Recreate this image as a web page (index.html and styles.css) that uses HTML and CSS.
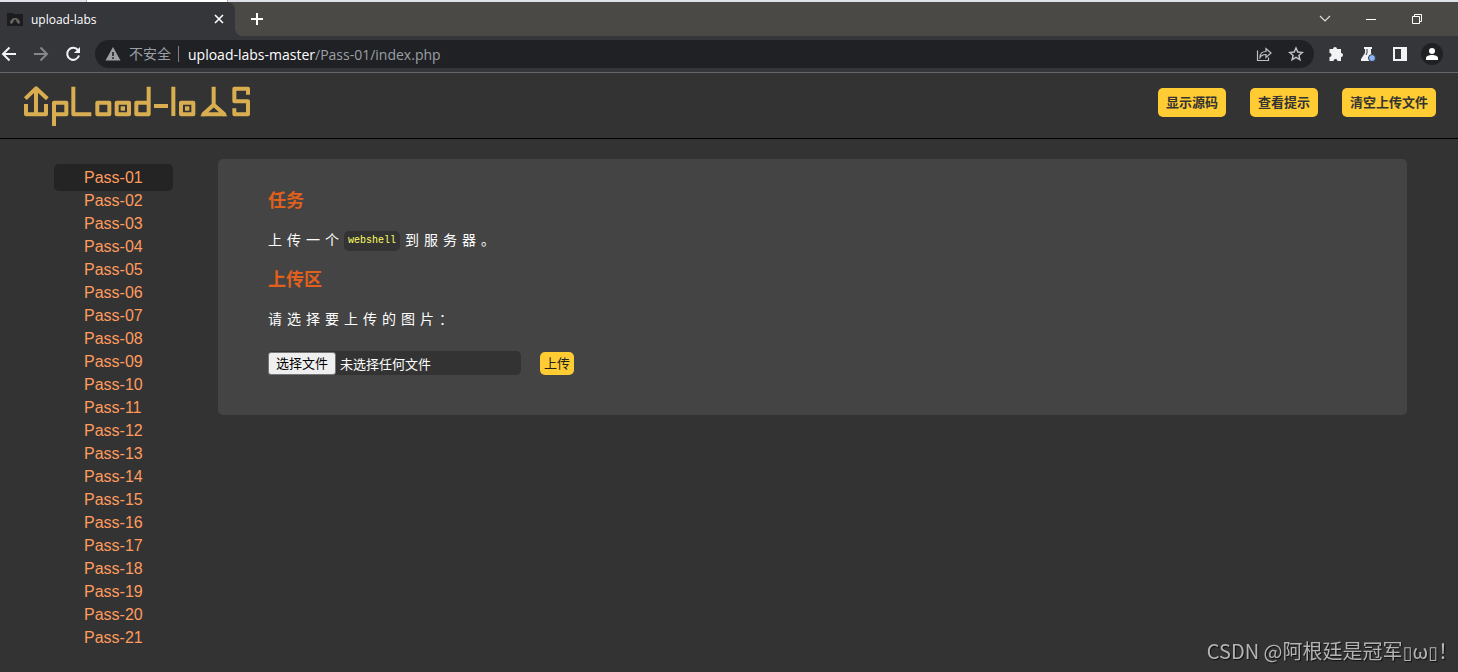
FILE: index.html
```
<!DOCTYPE html>
<html lang="zh-CN">
  <head>
    <meta charset="UTF-8" />
    <title>upload-labs</title>
    <link rel="stylesheet" href="styles.css">
  </head>
  <body>
    <div class="browser">
      <div class="desktop-edge"><span class="edge-light"></span></div>
      <div class="tab-strip">
        <div class="tab">
          <svg class="favicon" width="16" height="14" viewBox="0 0 16 14">
            <path d="M0 1h6l1 1h9v12H0z" fill="#1c1c1c" />
            <path d="M3 11a5 5 0 0 1 10 0l-2 1-1-2H6l-1 2z" fill="#666" />
            <circle cx="8" cy="9" r="1.5" fill="#222" />
          </svg>
          <span class="tab-title">upload-labs</span>
          <button class="icon-btn tab-close" aria-label="关闭">
            <svg width="10" height="10" viewBox="0 0 10 10"><path d="M1 1l8 8M9 1L1 9" stroke="#fff" stroke-width="1.6" /></svg>
          </button>
        </div>
        <button class="icon-btn new-tab" aria-label="新标签页">
          <svg width="12" height="12" viewBox="0 0 12 12"><path d="M6 0v12M0 6h12" stroke="#fff" stroke-width="2" /></svg>
        </button>
        <div class="window-buttons">
          <button class="icon-btn" aria-label="搜索标签页">
            <svg width="12" height="12" viewBox="0 0 12 12"><path d="M1 3l5 5 5-5" fill="none" stroke="#ddd" stroke-width="1.2" /></svg>
          </button>
          <button class="icon-btn" aria-label="最小化">
            <svg width="12" height="12" viewBox="0 0 12 12"><path d="M1 6.5h10" stroke="#fff" /></svg>
          </button>
          <button class="icon-btn" aria-label="还原">
            <svg width="12" height="12" viewBox="0 0 12 12"><path d="M1.5 3.5h7v7h-7zM3.5 3.5v-2h7v7h-2" fill="none" stroke="#fff" /></svg>
          </button>
        </div>
      </div>
      <div class="toolbar">
        <button class="icon-btn" aria-label="后退">
          <svg width="16" height="16" viewBox="0 0 16 16"><path d="M15 8H2M8.5 1.5L2 8l6.5 6.5" fill="none" stroke="#f1f3f4" stroke-width="2" /></svg>
        </button>
        <button class="icon-btn" aria-label="前进">
          <svg width="16" height="16" viewBox="0 0 16 16"><path d="M1 8h13M7.5 1.5L14 8l-6.5 6.5" fill="none" stroke="#85868a" stroke-width="2" /></svg>
        </button>
        <button class="icon-btn" aria-label="重新加载">
          <svg width="16" height="16" viewBox="0 0 16 16">
            <path d="M13 4.2A6 6 0 1 0 14 9.5" fill="none" stroke="#f1f3f4" stroke-width="2" />
            <path d="M15 1v6H9z" fill="#f1f3f4" />
          </svg>
        </button>
        <div class="address">
          <svg width="16" height="14" viewBox="0 0 16 14">
            <path d="M8 0l7.5 13.5H.5z" fill="#9aa0a6" />
            <path d="M8 5v4M8 10.2v1.8" stroke="#202124" stroke-width="1.6" />
          </svg>
          <span class="insecure">不安全</span>
          <span class="url"><b>upload-labs-master</b>/Pass-01/index.php</span>
          <button class="icon-btn" aria-label="分享">
            <svg width="16" height="16" viewBox="0 0 16 16" fill="none" stroke="#bdc1c6" stroke-width="1.2">
              <path d="M1.5 4.5v10h11v-3" />
              <path d="M4 11.5c0-4 2.5-6 6-6v-3l5 4.5-5 4.500v-3c-3 0-4.500.5-6 3z" />
            </svg>
          </button>
          <button class="icon-btn" aria-label="收藏">
            <svg width="16" height="16" viewBox="0 0 16 16"><path d="M8 2l1.8 4.1 4.4.4-3.3 2.9 1 4.3L8 11.4l-3.9 2.3 1-4.3-3.3-2.9 4.4-.4z" fill="none" stroke="#bdc1c6" stroke-width="1.5" /></svg>
          </button>
        </div>
        <button class="icon-btn" aria-label="扩展程序">
          <svg width="16" height="16" viewBox="0 0 16 16"><path d="M5 3a2 2 0 0 1 4 0h4v4a2 2 0 0 1 0 4v4H9.5a2 2 0 0 0-4 0h-4v-4a2 2 0 0 0 0-4V3z" fill="#f1f3f4" /></svg>
        </button>
        <button class="icon-btn" aria-label="实验">
          <svg width="16" height="16" viewBox="0 0 16 16">
            <path d="M4 1h8v2h-1v4l4 6v2H1v-2l4-6V3H4z" fill="#f1f3f4" />
            <path d="M7 3v4l-1 2" fill="none" stroke="#35363a" />
            <circle cx="12" cy="12" r="3.5" fill="#8ab4f8" stroke="#35363a" stroke-width="1" />
          </svg>
        </button>
        <button class="icon-btn" aria-label="侧边栏">
          <svg width="16" height="16" viewBox="0 0 16 16"><path d="M1 1h14v14H1zM3 3v10h6V3z" fill="#f1f3f4" fill-rule="evenodd" /></svg>
        </button>
        <button class="icon-btn profile" aria-label="个人资料">
          <svg width="14" height="14" viewBox="0 0 14 14">
            <circle cx="7" cy="4" r="3" fill="#fff" />
            <path d="M1 13v-2c0-2 3-3 6-3s6 1 6 3v2z" fill="#fff" />
          </svg>
        </button>
      </div>
    </div>

    <header class="head">
      <a class="logo" href="#" aria-label="upload-labs">
        <svg width="230" height="44" viewBox="66 42 690 132" fill="none" stroke="#d9ae51" stroke-width="12" stroke-linejoin="round">
          <path d="M76 86l32-31 34 31M108 54v78M78 102v31h60v-31" />
          <path d="M162 168V98h37v35h-37" />
          <path d="M220 50v83h54" />
          <rect x="292" y="98" width="36" height="35" />
          <rect x="350" y="98" width="37" height="35" />
          <path d="M446 50v83h-37V98h37" />
          <path d="M462 108h42M520 50v88" />
          <rect x="543" y="98" width="37" height="35" />
          <path d="M641 50v54l-31 29h63l-32-29" />
          <path d="M744 74V56h-41v38h41v39h-41v-18" />
          <g fill="#d9ae51" stroke="none">
            <rect x="362" y="109" width="13" height="13" />
            <rect x="555" y="109" width="13" height="13" />
            <path d="M600 139l14-13v13zM683 139l-14-13v13z" />
          </g>
        </svg>
      </a>
      <nav class="actions">
        <button class="btn">显示源码</button>
        <button class="btn">查看提示</button>
        <button class="btn">清空上传文件</button>
      </nav>
    </header>

    <div class="main">
      <ul class="menu">
        <li><a class="active" href="#">Pass-01</a></li>
        <li><a href="#">Pass-02</a></li>
        <li><a href="#">Pass-03</a></li>
        <li><a href="#">Pass-04</a></li>
        <li><a href="#">Pass-05</a></li>
        <li><a href="#">Pass-06</a></li>
        <li><a href="#">Pass-07</a></li>
        <li><a href="#">Pass-08</a></li>
        <li><a href="#">Pass-09</a></li>
        <li><a href="#">Pass-10</a></li>
        <li><a href="#">Pass-11</a></li>
        <li><a href="#">Pass-12</a></li>
        <li><a href="#">Pass-13</a></li>
        <li><a href="#">Pass-14</a></li>
        <li><a href="#">Pass-15</a></li>
        <li><a href="#">Pass-16</a></li>
        <li><a href="#">Pass-17</a></li>
        <li><a href="#">Pass-18</a></li>
        <li><a href="#">Pass-19</a></li>
        <li><a href="#">Pass-20</a></li>
        <li><a href="#">Pass-21</a></li>
      </ul>

      <main class="panel">
        <h3>任务</h3>
        <p>上传一个<code>webshell</code>到服务器。</p>
        <h3>上传区</h3>
        <form class="upload">
          <p>请选择要上传的图片：</p>
          <div class="upload-row">
            <label class="file">
              <input type="file" name="upload_file" />
              <span class="file-btn">选择文件</span>
              <span>未选择任何文件</span>
            </label>
            <button class="submit" type="submit">上传</button>
          </div>
        </form>
      </main>
    </div>

    <div class="watermark">CSDN @阿根廷是冠军<span class="box">▯</span>ω<span class="box">▯</span>！</div>
  </body>
</html>
```
FILE: styles.css
```
:root {
  --bg-page: #333;
  --bg-panel: #444;
  --bg-chrome: #35363a;
  --bg-strip: #4b4946;
  --bg-address: #202124;
  --color-accent: #fc3;
  --color-link: #ff9c5e;
  --color-title: #e0601c;
  --radius: 5px;
}

* {
  box-sizing: border-box;
}

body {
  margin: 0;
  background: var(--bg-page);
  color: #fff;
  font-family: "Liberation Sans", "Noto Sans CJK SC", sans-serif;
}

button {
  border: none;
  font-family: inherit;
  cursor: pointer;
}

/* Окно браузера */
.browser {
  background: var(--bg-chrome);
  border-bottom: 1px solid #63656a;
  font-family: "Open Sans", "Noto Sans CJK SC", sans-serif;
}

.desktop-edge {
  height: 2px;
  padding-left: 86px;
  background: #dfe2e8;
}

.edge-light {
  display: block;
  width: 142px;
  height: 2px;
  background: #fff;
  border: solid #aaa;
  border-width: 0 1px;
}

.tab-strip {
  display: flex;
  align-items: center;
  height: 34px;
  background: var(--bg-strip);
}

.tab {
  display: flex;
  align-items: center;
  gap: 8px;
  width: 235px;
  height: 34px;
  padding: 0 11px 0 7px;
  background: var(--bg-chrome);
  border-radius: 0 8px 0 0;
}

.tab-title {
  flex: 1;
  font-size: 12px;
}

.icon-btn {
  display: flex;
  align-items: center;
  justify-content: center;
  flex: none;
  padding: 0;
  background: none;
}

/* скругление у основания вкладки */
.new-tab {
  width: 44px;
  height: 34px;
  background: radial-gradient(circle at 100% 0, var(--bg-strip) 8px, var(--bg-chrome) 8px) 0 100% / 8px 8px no-repeat;
}

.window-buttons {
  display: flex;
  gap: 34px;
  height: 28px;
  margin-left: auto;
  margin-right: 35px;
}

.toolbar {
  display: flex;
  align-items: center;
  gap: 16px;
  height: 36px;
  padding-right: 15px;
  padding-left: 1px;
}

.address {
  display: flex;
  flex: 1;
  align-items: center;
  gap: 16px;
  height: 28px;
  margin-left: -2px;
  margin-right: -2px;
  padding: 0 10px;
  background: var(--bg-address);
  border-radius: 14px;
  font-size: 14px;
}

.insecure {
  margin-left: -8px;
  padding-right: 7px;
  border-right: 1px solid #7c8085;
  line-height: 16px;
  color: #9aa0a6;
}

.url {
  flex: 1;
  margin-left: -7px;
  color: #9aa0a6;
}

.url b {
  font-weight: normal;
  color: #fff;
}

.profile {
  width: 22px;
  height: 22px;
  margin-left: -3px;
  background: var(--bg-address);
  border-radius: 50%;
}

/* Шапка */
.head {
  display: flex;
  align-items: flex-start;
  justify-content: space-between;
  height: 66px;
  padding: 11px 22px 0;
  border-bottom: 1px solid #000;
}

.logo svg {
  display: block;
}

.actions {
  display: flex;
  gap: 24px;
  padding-top: 4px;
}

.btn {
  height: 29px;
  padding: 0 8px 2px;
  background: var(--color-accent);
  border-radius: var(--radius);
  font-size: 13px;
  font-weight: bold;
  color: #333;
}

/* Меню и панель */
.main {
  display: flex;
  align-items: flex-start;
  padding: 20px 51px 20px 54px;
}

.menu {
  flex: none;
  width: 164px;
  margin: 0;
  padding: 7px 0 0;
  list-style: none;
  line-height: 23px;
}

.menu a {
  padding: 5px 30px;
  border-radius: var(--radius);
  color: var(--color-link);
  text-decoration: none;
}

.menu .active {
  background: #242424;
}

.panel {
  flex: 1;
  padding: 30px 50px 40px;
  background: var(--bg-panel);
  border-radius: var(--radius);
}

.panel h3 {
  margin: 0 0 15px;
  font-size: 18px;
  line-height: 24px;
  color: var(--color-title);
}

.panel p {
  margin: 0 0 16px;
  font-size: 14px;
  line-height: 24px;
  letter-spacing: 5px;
}

.panel code {
  display: inline-block;
  margin-right: 5px;
  padding: 0 4px;
  background: #333;
  border-radius: var(--radius);
  font-family: "Liberation Mono", monospace;
  font-size: 10px;
  line-height: 20px;
  letter-spacing: normal;
  vertical-align: middle;
  color: #ff6;
}

.panel .upload p {
  margin-bottom: 20px;
}

.upload-row {
  display: flex;
  align-items: center;
  gap: 19px;
  font-size: 13px;
}

.file {
  display: flex;
  align-items: center;
  gap: 4px;
  width: 253px;
  height: 24px;
  background: #333;
  border-radius: var(--radius);
}

.file input {
  position: absolute;
  width: 1px;
  height: 1px;
  opacity: 0;
}

.file-btn {
  padding: 0 7px;
  background: #efefef;
  border: 1px solid #767676;
  border-radius: 3px;
  line-height: 21px;
  color: #000;
}

.submit {
  height: 23px;
  padding: 0 4px 1px;
  background: var(--color-accent);
  border-radius: var(--radius);
  font-size: 13px;
  color: #222;
}

.watermark {
  position: fixed;
  right: 0;
  bottom: 4px;
  font-family: "Noto Sans CJK SC", sans-serif;
  font-size: 20px;
  line-height: 30px;
  color: #b4b4b4;
  text-shadow: 1px 1px 1px #111;
}

.watermark .box {
  font-family: "DejaVu Sans", sans-serif;
  font-size: 18px;
}
```
